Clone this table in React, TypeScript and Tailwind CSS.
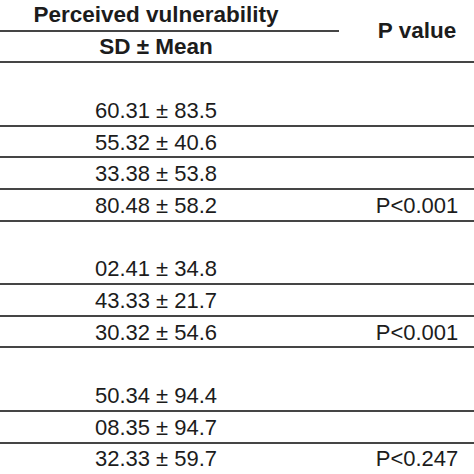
import React from "react";

type Row = { v: string; p?: string; h: string; tall?: boolean; last?: boolean };

const groups: Row[][] = [
  [
    { v: "60.31 ± 83.5", h: "h-[64px]", tall: true },
    { v: "55.32 ± 40.6", h: "h-[31px]" },
    { v: "33.38 ± 53.8", h: "h-[32px]" },
    { v: "80.48 ± 58.2", p: "P<0.001", h: "h-[32px]" },
  ],
  [
    { v: "02.41 ± 34.8", h: "h-[63px]", tall: true },
    { v: "43.33 ± 21.7", h: "h-[32px]" },
    { v: "30.32 ± 54.6", p: "P<0.001", h: "h-[31px]" },
  ],
  [
    { v: "50.34 ± 94.4", h: "h-[64px]", tall: true },
    { v: "08.35 ± 94.7", h: "h-[32px]" },
    { v: "32.33 ± 59.7", p: "P<0.247", h: "h-[30px]", last: true },
  ],
];

export default function App() {
  const rows = groups.flat();
  return (
    <div className="w-[474px] h-[474px] overflow-hidden bg-white text-[#1c1c1c] font-['Liberation_Sans',Arial,sans-serif]">
      <div className="flex border-b-2 border-[#454545]">
        <div className="w-[339px] flex flex-col">
          <div className="h-[32px] border-b-2 border-[#454545] flex items-center justify-center pr-[27px] text-[22.5px] font-bold leading-none">
            Perceived vulnerability
          </div>
          <div className="h-[29px] flex items-center justify-center pr-[27px] pt-[2px] text-[22.5px] font-bold leading-none">
            SD ± Mean
          </div>
        </div>
        <div className="flex-1 flex items-center justify-center pl-[21px] pt-[2px] text-[22.5px] font-bold leading-none">
          P value
        </div>
      </div>
      {rows.map((r, i) => (
        <div
          key={i}
          className={`flex ${r.h} ${r.last ? "items-center" : "border-b-2 border-[#454545]"} ${r.tall ? "items-end pb-[3px]" : r.last ? "" : "items-center pt-[2px]"}`}
        >
          <div className="w-[339px] flex justify-center pr-[27px] text-[22px] leading-none">
            {r.v}
          </div>
          <div className="flex-1 flex justify-center pl-[21px] text-[22px] leading-none">
            {r.p ?? ""}
          </div>
        </div>
      ))}
    </div>
  );
}
